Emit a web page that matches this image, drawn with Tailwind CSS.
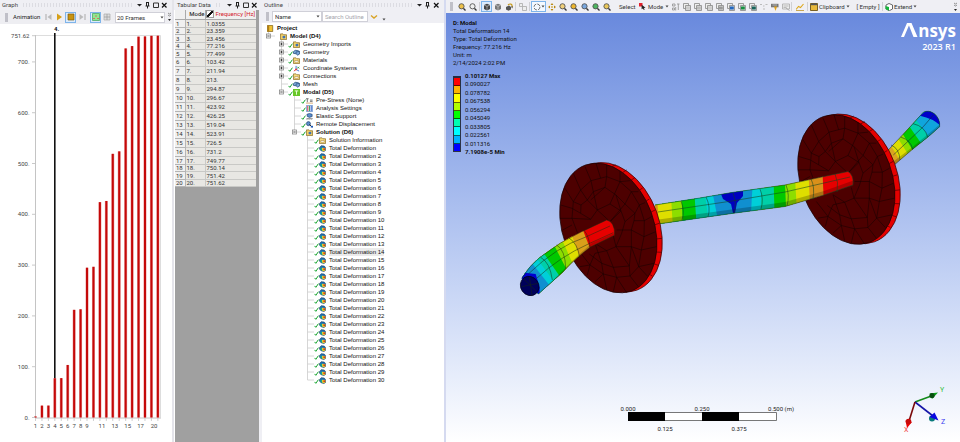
<!DOCTYPE html>
<html lang="en">
<head>
    <meta charset="UTF-8">
    <meta name="viewport" content="width=device-width, initial-scale=1.0">
    <title>Modal Analysis - Total Deformation 14</title>
    <script src="https://cdn.jsdelivr.net/npm/@tailwindcss/browser@4"></script>
</head>
<body class="h-screen overflow-hidden bg-[#efeff4] font-['Roboto',sans-serif] text-[6px] leading-[8px] text-[#333]">
    <!-- Shared icons -->
    <svg class="hidden">
        <symbol id="i-window" viewBox="0 0 32 8">
            <path d="M1 3h5L3.500 5.500z" fill="#222"/>
            <path d="M10 1.500h3M10.500 1.500v3.500M12.500 1.500v3.500M9.500 5h4M11.500 5v2.500" stroke="#222" fill="none"/>
            <path d="M17.500 2h5v4.500h-5z" stroke="#333" fill="none"/>
            <path d="M26 2l4.500 4.500M30.500 2L26 6.500" stroke="#111" stroke-width="1.200"/>
        </symbol>
        <symbol id="i-caret" viewBox="0 0 4 3"><path d="M.5.5h3L2 2.500z" fill="#444"/></symbol>
        <symbol id="i-more" viewBox="0 0 5 10"><path d="M1 1l1.500 1L4 1M1 3l1.500 1L4 3" stroke="#777" stroke-width=".8" fill="none"/><path d="M1 7h3L2.500 9z" fill="#222"/></symbol>
        <symbol id="i-check" viewBox="0 0 6 6"><path d="M.7 3.500L2.200 5.200 5.300.8" stroke="#13a32b" stroke-width="1.200" fill="none"/></symbol>
        <symbol id="i-project" viewBox="0 0 8 8"><path d="M.5.500h6v7h-6z" fill="#f1c232" stroke="#7a5a10" stroke-width=".8"/><path d="M.5.500h2v7h-2z" fill="#b07d14"/></symbol>
        <symbol id="i-folder" viewBox="0 0 8 8"><path d="M.5 1h3l1 1h3v5.500h-7z" fill="#f0cf66" stroke="#84661c" stroke-width=".8"/><circle cx="4.500" cy="4.700" r="1.700" fill="#3f73b5"/></symbol>
        <symbol id="i-folder2" viewBox="0 0 8 8"><path d="M.5 1h3l1 1h3v5.500h-7z" fill="#f7dc7c" stroke="#84661c" stroke-width=".8"/><path d="M2 4h4v2H2z" fill="#fff" stroke="#a6833a" stroke-width=".6"/></symbol>
        <symbol id="i-body" viewBox="0 0 8 8"><path d="M.5 3L2.500 1.500l3 .3 2 1v3L5.300 7 3.500 5.500.5 5z" fill="#7ba7d9" stroke="#1d4573" stroke-width=".8"/><path d="M3.500 3.300l4-.5M3.500 3.300v2.200" stroke="#1d4573" stroke-width=".7"/></symbol>
        <symbol id="i-axes" viewBox="0 0 8 8"><path d="M3.500 1v4l3.500 2" stroke="#2b66d4" fill="none"/><path d="M3.500 5L1 7" stroke="#d33"/><path d="M5 2l2 2M5 4l2-2" stroke="#2a9a49"/><circle cx="3.500" cy="5" r="1" fill="#e33"/></symbol>
        <symbol id="i-modal" viewBox="0 0 8 8"><path d="M0 0h8v8H0z" fill="#67c728"/><path d="M2 2.200h4M4 2.200V6.500" stroke="#e9ffd8" stroke-width="1.100"/></symbol>
        <symbol id="i-prestress" viewBox="0 0 8 8"><path d="M0 2h3M1.500 2v4M4.500 3.500h3M4.500 5h3" stroke="#555" stroke-width=".9"/><path d="M0 7h8" stroke="#c77f28" stroke-width=".7"/></symbol>
        <symbol id="i-settings" viewBox="0 0 8 8"><path d="M.5.500h7v7h-7z" fill="#d9e6f7" stroke="#4a7abf" stroke-width=".7"/><path d="M2 1v6" stroke="#d33"/><path d="M4 1v6" stroke="#2a9a49"/><path d="M6 1v6" stroke="#2b57c4"/></symbol>
        <symbol id="i-support" viewBox="0 0 8 8"><path d="M1 1.500L4 .5l3 1v2.500L4 5 1.500 4z" fill="#5c8dcc" stroke="#163a68" stroke-width=".7"/><path d="M.5 6.500h7M1 7.500l1-1M3.500 7.500l1-1M6 7.500l1-1" stroke="#333" stroke-width=".6"/></symbol>
        <symbol id="i-remote" viewBox="0 0 8 8"><circle cx="2.800" cy="3" r="2.300" fill="#5c8dcc" stroke="#163a68" stroke-width=".7"/><path d="M4 4l3 3" stroke="#111"/><path d="M5.500 5.500h2.500v2H5.500z" fill="#1b57b8"/></symbol>
        <symbol id="i-result" viewBox="0 0 8 8"><path d="M.5 3L2.500.8l3.500.4L7.500 3v3.200L5.500 7.500 2.500 6.500.8 5z" fill="#1f6fb5" stroke="#1c3d5e" stroke-width=".7"/><path d="M1 4.500l2-1.700 1.500 4L2.300 6z" fill="#19a58b"/><path d="M3.300 3l3.900.3v2.900L5.400 7.200 3.800 6.500z" fill="#ecd32a"/><path d="M5 3.800h2v2H5z" fill="#d93a1e"/></symbol>
        <symbol id="i-zoom" viewBox="0 0 8 8"><path d="M5.300 5.300L7.500 7.500" stroke="#333" stroke-width="1.300"/><circle cx="3.500" cy="3.300" r="2.600" fill="currentColor" stroke="#555" stroke-width=".9"/></symbol>
        <symbol id="i-cube" viewBox="0 0 8 8"><path d="M1 2l3-1.300L7 2v4L4 7.500 1 6z" fill="currentColor"/><path d="M1 2l3 1.300L7 2M4 3.300v4" stroke="#eee" stroke-width=".5" fill="none"/></symbol>
        <symbol id="i-spin" viewBox="0 0 8 8"><path d="M1 4l3-1.500L6 4v2.500L3.500 7.700 1 6.500z" fill="#555"/><path d="M3 2C5 0 7.500 1 7.200 4" stroke="#c79a18" stroke-width="1.100" fill="none"/><path d="M6 3.500h2L7.200 5.500z" fill="#444"/></symbol>
        <symbol id="i-windows" viewBox="0 0 8 8"><path d="M.5.500h3v3h-3zM3.500 3.500h4v4h-4z" fill="#eee" stroke="#aaa" stroke-width=".8"/></symbol>
        <symbol id="i-rotate" viewBox="0 0 8 8"><circle cx="4" cy="4" r="3" fill="none" stroke="#666" stroke-width=".9" stroke-dasharray="3.500 1.200"/></symbol>
        <symbol id="i-pan" viewBox="0 0 8 8"><path d="M4 0l1.400 2H2.600zM4 8l1.400-2H2.600zM0 4l2-1.400v2.800zM8 4L6 2.600v2.800z" fill="#b8860b"/><path d="M3.300 3.300h1.400v1.400H3.300z" fill="#c9981c"/></symbol>
        <symbol id="i-mode" viewBox="0 0 8 8"><path d="M0 0h4v4H0z" fill="#e3202c"/><path d="M3 2l4.500 3.500-2 .3 1 1.700-1 .5-1-1.800L3 7.200z" fill="#222"/></symbol>
        <symbol id="i-grid" viewBox="0 0 8 8"><path d="M.5 1h2.500v2H.5zM5 1h2.500M6.300 1v6M.5 5h2v2h-2zM3.700 4v3.500" stroke="#999" stroke-width=".9" fill="none"/></symbol>
        <symbol id="i-copy" viewBox="0 0 8 8"><path d="M.5.500h5v5h-5z" fill="#eee" stroke="#888" stroke-width=".8"/><path d="M2.500 2.500h5v5h-5z" fill="#ddd" stroke="#888" stroke-width=".8"/><path d="M3 3.500h3.800v3H3z" fill="currentColor"/></symbol>
        <symbol id="i-tag" viewBox="0 0 8 8"><path d="M0 .8h7.500v3.500H0z" fill="#777"/><path d="M3 3.500h3L4.500 8z" fill="#e0a21c"/><path d="M1.500 2h4.500" stroke="#ddd" stroke-width=".6"/></symbol>
        <symbol id="i-dots" viewBox="0 0 8 8"><path d="M0 1.500h2M3 3h1.500M5.500 1.500h2M4 5v2" stroke="#bbb"/></symbol>
        <symbol id="i-note" viewBox="0 0 8 8"><path d="M.5 1h7v5h-7z" fill="#eee" stroke="#aaa" stroke-width=".8"/><path d="M1.500 3h5M1.500 4.500h3" stroke="#999" stroke-width=".6"/><path d="M4 5l3.500 2.500" stroke="#aaa"/></symbol>
        <symbol id="i-chart" viewBox="0 0 8 8"><path d="M0 6.500l2.500-3 2 1L7.500 1" stroke="#dda71c" stroke-width="1.100" fill="none"/><path d="M0 7.500h8" stroke="#b8860b" stroke-width=".7"/></symbol>
        <symbol id="i-clipboard" viewBox="0 0 8 8"><path d="M.5.500h7v7h-7z" fill="#e9b93a" stroke="#6d5316" stroke-width=".9"/><path d="M1 .5h6v1.700H1z" fill="#555"/></symbol>
        <symbol id="i-extend" viewBox="0 0 8 8"><path d="M1 2l3-1.500L7.500 2v4L4.300 7.700 1 6z" fill="#fff" stroke="#444" stroke-width=".8"/><path d="M.5 3l3.500 1v3.700L.5 6z" fill="#16b53a"/></symbol>
    </svg>

    <div class="flex h-full">
        <!-- Graph -->
        <section class="flex w-[174px] shrink-0 flex-col border-r-2 border-[#e4e4ea]">
            <header class="flex h-[10px] shrink-0 items-center gap-1 pl-[2px] pr-1">
                <h2 class="text-[#444]">Graph</h2>
                <span class="h-[4px] flex-1 bg-[radial-gradient(#dcdce2_1px,transparent_1px)] bg-[size:3px_2px]"></span>
                <svg class="h-2 w-8"><use href="#i-window"/></svg>
            </header>
            <div class="flex h-[14px] shrink-0 items-center bg-[#eeeef2] pl-[5px]">
                <span class="mr-[5px] h-[9px] w-[3px] bg-[radial-gradient(#c0c0c8_1px,transparent_1px)] bg-[size:2px_2px]"></span>
                <span class="w-[32px] text-[#222]">Animation</span>
                <button aria-label="First frame" class="w-[8px]"><svg viewBox="0 0 8 8" class="size-2"><path d="M1 1v6" stroke="#aaa"/><path d="M6.500 1v6L2.500 4z" fill="#bbb"/></svg></button>
                <button aria-label="Play" class="ml-[2px] w-[10px]"><svg viewBox="0 0 8 8" class="size-2"><path d="M2 .5v7L7 4z" fill="#d6a018"/></svg></button>
                <button aria-label="Stop" class="flex size-[11px] items-center justify-center border border-[#7eb4ea] bg-[#dcebfc]"><svg viewBox="0 0 8 8" class="size-2"><path d="M1 1h6v6H1z" fill="#c8930f" stroke="#7c5c0d" stroke-width=".7"/></svg></button>
                <button aria-label="Last frame" class="ml-[2px] w-[8px]"><svg viewBox="0 0 8 8" class="size-2"><path d="M7 1v6" stroke="#aaa"/><path d="M1.500 1v6l4-3z" fill="#bbb"/></svg></button>
                <button aria-label="Distributed" class="ml-1 flex size-[11px] items-center justify-center border border-[#7eb4ea] bg-[#dcebfc]"><svg viewBox="0 0 8 8" class="size-2"><path d="M.5.500h7v7h-7z" fill="#8fe88f" stroke="#3fa15a" stroke-width=".7"/><path d="M1 5.500h2M5 5.500h2M3 3h2" stroke="#d55" stroke-width=".8"/></svg></button>
                <button aria-label="Result sets" class="flex size-[11px] items-center justify-center"><svg viewBox="0 0 8 8" class="size-2"><path d="M1 1h6v6H1z" fill="#ddd" stroke="#aaa" stroke-width=".7"/><path d="M1 4h6M4 1v6" stroke="#999" stroke-width=".7"/></svg></button>
                <div class="relative ml-[3px] w-[50px]">
                    <select aria-label="Frames" class="block h-[11px] w-full appearance-none border border-[#d0d0d8] bg-white pl-[1px] leading-[9px]"><option>20 Frames</option></select>
                    <svg class="pointer-events-none absolute right-[1px] top-1 h-[3px] w-1"><use href="#i-caret"/></svg>
                </div>
                <svg class="ml-[2px] h-[10px] w-[5px]"><use href="#i-more"/></svg>
            </div>
            <div class="min-h-0 flex-1 bg-white">
                <svg id="chart" viewBox="0 24 172 418" class="h-full w-full" font-size="6" fill="#444">
                    <path d="M35.500 35.500H160.500V417.500" stroke="#ddd" fill="none"/>
                    <path d="M35.500 35V418H161" stroke="#c4c4c4" fill="none"/>
                    <path d="M54.800 33V417" stroke="#111" stroke-width="1.600"/>
                    <text x="54" y="31" fill="#111" font-weight="700">4.</text>
                </svg>
            </div>
        </section>

        <!-- Tabular data -->
        <section class="flex w-[88px] shrink-0 flex-col">
            <header class="flex h-[10px] shrink-0 items-center gap-1 pl-[3px] pr-1">
                <h2 class="whitespace-nowrap text-[#444]">Tabular Data</h2>
                <span class="h-[4px] flex-1 bg-[radial-gradient(#dcdce2_1px,transparent_1px)] bg-[size:3px_2px]"></span>
                <svg class="h-2 w-8"><use href="#i-window"/></svg>
            </header>
            <div class="mr-[3px] flex-1 border-l border-white bg-[#a0a0a0] pr-[3px]">
                <table class="w-full table-fixed border-collapse text-left text-[#333]">
                    <colgroup><col class="w-[10px]"><col class="w-[20px]"><col></colgroup>
                    <thead>
                        <tr class="h-[9px] bg-[#f0f0f0]">
                            <th class="border-b border-r border-[#aaa] p-0"></th>
                            <th class="border-b border-r border-[#aaa] p-0 text-right font-medium">Mode</th>
                            <th class="border-b border-[#aaa] p-0 font-normal text-[#d4202c]">
                                <span class="flex items-center gap-[2px] whitespace-nowrap">
                                    <input id="freq" type="checkbox" checked class="size-[8px] appearance-none border border-[#999] bg-white bg-[linear-gradient(135deg,transparent_40%,#111_40%,#111_65%,transparent_65%)]">
                                    <label for="freq">Frequency [Hz]</label>
                                </span>
                            </th>
                        </tr>
                    </thead>
                    <tbody id="modes"></tbody>
                </table>
            </div>
        </section>

        <!-- Outline -->
        <section class="flex w-[184px] shrink-0 flex-col border-r-2 border-[#d5daf0]">
            <header class="flex h-[10px] shrink-0 items-center gap-1 pl-[2px] pr-1">
                <h2 class="text-[#444]">Outline</h2>
                <span class="h-[4px] flex-1 bg-[radial-gradient(#dcdce2_1px,transparent_1px)] bg-[size:3px_2px]"></span>
                <svg viewBox="0 0 24 8" class="h-2 w-6"><path d="M1 3h5L3.500 5.500z" fill="#222"/><path d="M10 1.500h3M10.500 1.500v3.500M12.500 1.500v3.500M9.500 5h4M11.500 5v2.500" stroke="#222" fill="none"/><path d="M18 2l4.500 4.500M22.500 2L18 6.500" stroke="#111" stroke-width="1.200"/></svg>
            </header>
            <div class="flex h-[13px] shrink-0 items-center pl-1">
                <span class="mr-[3px] h-[9px] w-[3px] bg-[radial-gradient(#c0c0c8_1px,transparent_1px)] bg-[size:2px_2px]"></span>
                <div class="relative w-[50px]">
                    <select aria-label="Filter by" class="block h-[11px] w-full appearance-none border border-[#d0d0d8] bg-white pl-[2px] leading-[9px]"><option>Name</option></select>
                    <svg class="pointer-events-none absolute right-[2px] top-1 h-[3px] w-1"><use href="#i-caret"/></svg>
                </div>
                <input type="text" aria-label="Search Outline" placeholder="Search Outline" class="h-[11px] w-[46px] border border-[#d0d0d8] bg-white px-[2px] placeholder:text-[#a5a5ad]">
                <button aria-label="Search options" class="ml-[2px]"><svg viewBox="0 0 8 8" class="size-2"><path d="M1 2.500l3 2.500 3-2.500" stroke="#d9a426" stroke-width="1.400" fill="none"/></svg></button>
                <svg class="ml-1 mt-[5px] h-[3px] w-1"><use href="#i-caret"/></svg>
            </div>
            <ul id="tree" class="flex-1 bg-white pt-[1px] font-['Liberation_Sans',sans-serif] text-[6px] text-[#111]"></ul>
        </section>

        <!-- Graphics window -->
        <main class="flex min-w-0 flex-1 flex-col">
            <nav class="flex h-[13px] shrink-0 items-center overflow-hidden whitespace-nowrap pl-[4px]">
                <span class="mr-[3px] h-[9px] w-[3px] bg-[radial-gradient(#c0c0c8_1px,transparent_1px)] bg-[size:2px_2px]"></span>
                <div id="tools-view" class="flex items-center"></div>
                <button class="ml-[7px] w-[20px] text-left">Select</button>
                <button class="flex w-[31px] items-center gap-[2px]"><svg class="size-[7px]"><use href="#i-mode"/></svg>Mode<svg class="h-[3px] w-1"><use href="#i-caret"/></svg></button>
                <div id="tools-select" class="flex items-center"></div>
                <span class="h-[9px] border-l border-[#d0d0d4]"></span>
                <button aria-label="Chart" class="ml-1 w-[11px]"><svg class="size-2"><use href="#i-chart"/></svg></button>
                <span class="h-[9px] border-l border-[#d0d0d4]"></span>
                <button class="ml-[2px] flex w-[44px] items-center gap-[1px]"><svg class="size-[8px]"><use href="#i-clipboard"/></svg>Clipboard<svg class="h-[3px] w-1"><use href="#i-caret"/></svg></button>
                <button class="w-[28px]">[ Empty ]</button>
                <span class="h-[9px] border-l border-[#d0d0d4]"></span>
                <button class="ml-[2px] flex items-center gap-[1px]"><svg class="size-[8px]"><use href="#i-extend"/></svg>Extend<svg class="h-[3px] w-1"><use href="#i-caret"/></svg></button>
                <svg class="ml-auto mr-[2px] h-[10px] w-[5px]"><use href="#i-more"/></svg>
            </nav>
            <div class="relative min-h-0 flex-1 bg-linear-to-b from-[#6989dd] to-white text-[#111]">
                <svg id="model" viewBox="446 13 514 429" class="absolute inset-0 h-full w-full" stroke-linejoin="round">
                    <defs>
                        <!-- Disk drawn at three times its size -->
                        <g id="disk">
                            <ellipse cx="311" cy="232" rx="137" ry="201" transform="rotate(-20 311 232)" fill="#e60000" stroke="#300" stroke-width="2"/>
                            <ellipse cx="295" cy="234" rx="137" ry="201" transform="rotate(-20 295 234)" fill="#4d0000" stroke="#1a0000" stroke-width="2"/>
                            <path d="M317 44l-14 7M350 60l-13 8M374 84l-14 8M398 114l-14 9M418 147l-14 9M435 180l-15 8M448 220l-16 5M456 265l-17 2M455 307l-17-1M445 346l-15-5M427 378l-12-7" stroke="#400" stroke-width="2"/>
                            <path fill="none" stroke="#140000" stroke-width="2" opacity=".8" d="M290 80L243 92 212 120 190 155 186 205 205 255M290 80L330 95 364 125 388 165 403 212 402 260 394 300 386 350 360 378 320 382 280 372 240 345 205 300
                                M213 165L232 150 250 125 285 112 318 135 345 162 375 190 372 212 364 240 364 290 358 348 310 352 275 340 238 312M213 165L212 190 242 208 262 180 300 162 333 183 345 215 335 250 318 290 290 302 255 280
                                M225 50L243 92 250 125 262 180 295 210M258 40L272 85M318 135L333 183 300 215M290 45L290 80 285 112 242 150M190 70L212 120 232 150 262 180M165 115L190 155 213 165M152 165L186 175 212 190M150 205L186 205 242 208M158 240L186 225
                                M330 62L330 95 300 162M360 92L330 95M385 125L364 125 345 162 300 215M405 158L388 165 375 190 345 215M425 200L403 212 372 212M437 245L402 260 364 240 320 240M440 290L394 300 364 290 318 290 310 258M432 340L386 350 364 290M412 378L386 350M385 410L360 378 358 348 318 290M350 428L320 382 310 352 290 302M310 425L320 382M290 418L280 372 275 340 255 280M255 395L280 372M232 375L240 345 255 310 290 302M210 350L240 345"/>
                        </g>
                        <clipPath id="shaft"><path d="M655 205L700 198 732 192.500 785 185 824 176.500 848 171.500Q854 175 853 185L824 195 785 206.500 735 213 658 224Z"/></clipPath>
                        <clipPath id="near"><path d="M35 385Q60 345 90 322Q150 275 215 245L290 210Q315 215 314 256L240 292Q190 330 160 365L85 432Z"/></clipPath>
                        <clipPath id="far"><path d="M305 170L345 128 385 85 415 52Q430 44 448 56 466 72 464 95L430 125 380 165 330 208Z"/></clipPath>
                    </defs>
                    <!-- Far end of the shaft -->
                    <g transform="translate(785 95) scale(.3333)">
                        <g clip-path="url(#far)">
                            <path d="M280 30h200v200h-200z" fill="#d9a520"/>
                            <path d="M315 148l35 55 140-60v-120h-90z" fill="#dede00"/>
                            <path d="M336 125l38 60 120-60v-110h-90z" fill="#8ddd00"/>
                            <path d="M350 112l36 58 110-60v-90h-90z" fill="#00c800"/>
                            <path d="M370 90l42 60 90-50v-80h-90z" fill="#00cfa8"/>
                            <path d="M388 68l46 58 60-40v-60h-70z" fill="#10a5dc"/>
                            <path d="M405 62l30-24 40 25-8 30q-20-22-62-31z" fill="#0000c8"/>
                            <path d="M330 215L470 105V84L380 158 322 202z" fill="#000" opacity=".2"/>
                        </g>
                        <path d="M305 170L345 128 385 85 415 52Q430 44 448 56 466 72 464 95L430 125 380 165 330 208M325 180L370 138 415 95 445 60M318 150q25 10 27 45M347 126q32 10 36 38M384 86q36 8 44 40" fill="none" stroke="#123" stroke-width="2" opacity=".8"/>
                    </g>
                    <use href="#disk" transform="translate(748 101.500) scale(.3333)"/>
                    <!-- Middle of the shaft -->
                    <g clip-path="url(#shaft)">
                        <path d="M650 160h220v70h-220z" fill="#e60000"/>
                        <path d="M650 160h172l3 70h-175z" fill="#d9901a"/>
                        <path d="M650 160h158l3 70h-161z" fill="#dede00"/>
                        <path d="M650 160h144l4 70h-148z" fill="#8ddd00"/>
                        <path d="M650 160h134l3 70h-137z" fill="#00c800"/>
                        <path d="M650 160h123l2 70h-125z" fill="#00cfa8"/>
                        <path d="M650 160h112l-2 70h-110z" fill="#00cfd8"/>
                        <path d="M650 160h104l-4 70h-100z" fill="#108fd0"/>
                        <path d="M650 160h56l14 70h-70z" fill="#00cfd8"/>
                        <path d="M650 160h50l10 70h-60z" fill="#00cfa8"/>
                        <path d="M650 160h42l5 70h-47z" fill="#00c800"/>
                        <path d="M650 160h30l3 70h-33z" fill="#8ddd00"/>
                        <path d="M650 160h19l4 70h-23z" fill="#dede00"/>
                        <path d="M650 160h5l4 70h-9z" fill="#d9901a"/>
                        <path d="M721 194l22-4v6l-6 7-2 10h-2l-2-9-8-5z" fill="#0000c0"/>
                        <path d="M655 220L735 209 785 202 824 191 855 180V190L785 208 658 226z" opacity=".22"/>
                    </g>
                    <path d="M655 205L700 198 732 192.500 785 185 824 176.500 848 171.500Q854 175 853 185L824 195 785 206.500 735 213 658 224M658 212L732 201 785 192 850 177M681 201q4 10 1 19M706 197q5 10 2 20M733 193q4 10 1 20M760 189q4 10 1 20M786 185q4 10 1 21M811 179q4 8 2 20M835 174q4 8 2 18" fill="none" stroke="#142" stroke-width=".7" opacity=".8"/>
                    <use href="#disk" transform="translate(510 150) scale(.3333)"/>
                    <!-- Near end of the shaft -->
                    <g transform="translate(510 150) scale(.3333)">
                        <g clip-path="url(#near)">
                            <path d="M20 190h310v260H20z" fill="#e60000"/>
                            <path d="M215 230l27 70-110 150H20V230z" fill="#d9a01a"/>
                            <path d="M182 245l28 80-80 125H20V230z" fill="#dede00"/>
                            <path d="M152 260l38 85-70 105H20V260z" fill="#8ddd00"/>
                            <path d="M132 285l36 70-60 95H20V285z" fill="#00c800"/>
                            <path d="M98 305l50 72-50 73H20V305z" fill="#00cfa8"/>
                            <path d="M78 322l52 70-40 58H20V322z" fill="#00cfd8"/>
                            <path d="M65 338l55 70-30 42H20V338z" fill="#108fd0"/>
                            <path d="M45 368l32 4 12 40v40H20V368z" fill="#0000d0"/>
                            <path d="M80 440L165 355 200 320 245 280 320 246V270L160 380z" opacity=".2"/>
                        </g>
                        <ellipse cx="59" cy="408" rx="27" ry="30" transform="rotate(-35 59 408)" fill="#00005a" stroke="#001" stroke-width="2"/>
                        <path d="M35 385Q60 345 90 322Q150 275 215 245L290 210Q315 215 314 256L240 292Q190 330 160 365L85 432M55 372Q140 290 225 262L300 228M80 385Q150 320 235 282L310 248M92 322q28 15 35 68M140 285q26 15 27 70M176 263q28 18 33 60M222 241q16 18 18 52M35 410l50-10M58 380l8 55M42 388l35 34" fill="none" stroke="#142a10" stroke-width="2" opacity=".75"/>
                    </g>
                    <!-- Scale ruler -->
                    <g font-size="6" fill="#222" text-anchor="middle">
                        <path d="M628.500 412.500h148v8h-148z" fill="#fff" stroke="#555" stroke-width=".8"/>
                        <path d="M628 412h37v9h-37zM702 412h37v9h-37z" fill="#000"/>
                        <text x="628" y="411">0.000</text>
                        <text x="702" y="411">0.250</text>
                        <text x="781" y="411">0.500 (m)</text>
                        <text x="665" y="431">0.125</text>
                        <text x="739" y="431">0.375</text>
                    </g>
                    <!-- Axis triad -->
                    <path d="M915 402L934 395" stroke="#138a1b" stroke-width="1.600"/>
                    <path d="M938 392.500L929.500 393.500 932 399z" fill="#0ba01a"/><circle cx="932" cy="395.500" r="2.600" fill="#084f10"/>
                    <circle cx="932" cy="418.500" r="3" fill="#087a7a"/>
                    <path d="M915 402L933 416" stroke="#1717a8" stroke-width="1.600"/>
                    <path d="M938.500 420.500L929.500 417 934.500 412.500z" fill="#0909e0"/>
                    <path d="M915 402L909 421" stroke="#7a0a0a" stroke-width="1.600"/>
                    <path d="M907 428L905.500 420.500 912 422z" fill="#e00"/><circle cx="908.500" cy="421.500" r="2.800" fill="#c80a0a"/>
                    <g font-size="7">
                        <text x="940" y="392" fill="#35c03c">Y</text>
                        <text x="941" y="424" fill="#3a3af0">Z</text>
                        <text x="904" y="432" fill="#f03a3a">X</text>
                    </g>
                </svg>
                <div class="absolute left-[7px] top-[6px]">
                    <p class="font-bold">D: Modal</p>
                    <p>Total Deformation 14</p>
                    <p>Type: Total Deformation</p>
                    <p>Frequency: 77.216 Hz</p>
                    <p>Unit: m</p>
                    <p>2/14/2024 2:02 PM</p>
                    <div class="mt-[5px] flex gap-1">
                        <div class="my-1 flex w-2 flex-col divide-y divide-black/60 border border-t-2 border-black/70">
                            <span class="flex-1 bg-[#ff0000]"></span>
                            <span class="flex-1 bg-[#ffb200]"></span>
                            <span class="flex-1 bg-[#ffff00]"></span>
                            <span class="flex-1 bg-[#b2ff00]"></span>
                            <span class="flex-1 bg-[#00ff00]"></span>
                            <span class="flex-1 bg-[#00ffb2]"></span>
                            <span class="flex-1 bg-[#00ffff]"></span>
                            <span class="flex-1 bg-[#00b2ff]"></span>
                            <span class="flex-1 bg-[#0000ff]"></span>
                        </div>
                        <div class="flex h-[84px] flex-col justify-between">
                            <b>0.10127 Max</b>
                            <span>0.090027</span>
                            <span>0.078782</span>
                            <span>0.067538</span>
                            <span>0.056294</span>
                            <span>0.045049</span>
                            <span>0.033805</span>
                            <span>0.022561</span>
                            <span>0.011316</span>
                            <b>7.1908e-5 Min</b>
                        </div>
                    </div>
                </div>
                <div class="absolute right-1 top-[8px] text-right font-['Open_Sans',sans-serif] text-white">
                    <div class="flex items-end text-[17px] font-bold leading-[20px]" role="img" aria-label="Ansys">
                        <svg viewBox="0 0 17 14" class="mb-[4px] h-[14px] w-[17px]"><path d="M0 14L6 0h3L3 14zM7 0h3.500l6 14h-4z" fill="#fff"/></svg>nsys
                    </div>
                    <p class="mt-[1px] text-[9px] font-semibold leading-[10px]">2023 R1</p>
                </div>
            </div>
        </main>
    </div>

    <script>
        var freqs = ['1.0355', '23.359', '23.456', '77.216', '77.499', '103.42', '211.94', '213.', '294.87', '296.67', '423.92', '426.25', '519.04', '523.91', '726.5', '731.2', '749.77', '750.14', '751.42', '751.62'];

        // Frequency table
        document.getElementById('modes').innerHTML = freqs.map(function (f, i) {
            var h = i > 4 && i < 16 ? 'h-[9px] leading-[8px]' : i % 2 ? 'h-[7px] leading-[6px]' : 'h-[8px] leading-[7px]';
            return '<tr class="bg-[#e8e7e3] ' + h + '"><th class="border-b border-r border-[#b5b5b5] bg-[#f0f0f0] p-0 pl-[1px] font-normal">' + (i + 1) +
                '</th><td class="border-b border-r border-[#c9c9c6] p-0 pl-[1px]">' + (i + 1) + '.</td><td class="border-b border-[#c9c9c6] p-0 pl-[1px]">' + f + '</td></tr>';
        }).join('');

        // Bar chart
        var base = 417.5, scale = 381.8 / 751.62, out = '';
        freqs.forEach(function (f, i) {
            var x = 35.5 + i * 6.44, h = Math.max(parseFloat(f) * scale, 1);
            out += '<rect x="' + (x - 1.5) + '" y="' + (base - h) + '" width="3" height="' + h + '" fill="#eba3a3"/>';
            out += '<rect x="' + (x - 1) + '" y="' + (base - h) + '" width="2" height="' + h + '" fill="#c40808"/>';
            out += '<path d="M' + x + ' 418v3" stroke="#c4c4c4" stroke-width=".8"/>';
        });
        [0, 100, 200, 300, 400, 500, 600, 700, 751.62].forEach(function (v) {
            var y = base - v * scale;
            out += '<path d="M32 ' + y + 'h3" stroke="#bbb" stroke-width=".8"/><text x="29.5" y="' + (y + 2) + '" text-anchor="end">' + (v % 1 ? v : v + '.') + '</text>';
        });
        [1, 2, 3, 4, 5, 6, 7, 8, 9, 11, 13, 15, 17, 20].forEach(function (m) {
            var x = m === 20 ? 154 : 35.5 + (m - 1) * 6.44 + (m > 9 ? 2 : 0);
            out += '<text x="' + x + '" y="427.5" text-anchor="middle">' + m + '</text>';
        });
        document.getElementById('chart').innerHTML += out;

        // Outline rows: depth, icon, label, expander
        var rows = [
            [0, 'project', 'Project'], [1, 'folder', 'Model (D4)', '-'],
            [2, 'folder', 'Geometry Imports', '+'], [2, 'body', 'Geometry', '+'], [2, 'folder2', 'Materials', '+'],
            [2, 'axes', 'Coordinate Systems', '+'], [2, 'folder2', 'Connections', '+'], [2, 'body', 'Mesh'],
            [2, 'modal', 'Modal (D5)', '-'],
            [3, 'prestress', 'Pre-Stress (None)'], [3, 'settings', 'Analysis Settings'], [3, 'support', 'Elastic Support'],
            [3, 'remote', 'Remote Displacement'], [3, 'folder', 'Solution (D6)', '-'],
            [4, 'folder2', 'Solution Information'], [4, 'result', 'Total Deformation']
        ];
        for (var n = 2; n <= 30; n++) rows.push([4, 'result', 'Total Deformation ' + n]);

        document.getElementById('tree').innerHTML = rows.map(function (r, i) {
            var w = r[0] * 13, x = w - 6.5, last = !rows[i + 1] || rows[i + 1][0] < r[0] || /D[456]/.test(r[2]);
            var bold = r[0] === 0 || /D[456]/.test(r[2]);
            var svg = '';
            if (r[0]) {
                svg = '<svg class="h-2 shrink-0" width="' + w + '" height="8"><path d="M' + x + ' 0V' + (last ? 4 : 8) + 'M' + x + ' 4H' + w + '" stroke="#ccc" fill="none" stroke-width=".8"/>';
                if (r[3]) svg += '<rect x="' + (x - 2) + '" y="2" width="4" height="4" fill="#fff" stroke="#888" stroke-width=".8"/><path d="M' + (x - 1.2) + ' 4h2.4' + (r[3] === '+' ? 'M' + x + ' 2.800v2.400' : '') + '" stroke="#222" stroke-width=".8"/>';
                svg += '</svg>';
            }
            return '<li class="flex h-2 items-center whitespace-nowrap">' + svg +
                '<span class="flex h-2 w-[5px] shrink-0 items-end">' + (r[0] > 1 ? '<svg class="size-[5px] shrink-0"><use href="#i-check"/></svg>' : '') + '</span>' +
                '<svg class="mr-[3px] size-[7px] shrink-0"><use href="#i-' + r[1] + '"/></svg>' +
                '<span class="' + (bold ? 'font-bold' : '') + (r[2] === 'Total Deformation 14' ? 'bg-[#ebebeb]' : '') + '">' + r[2] + '</span></li>';
        }).join('');

        // Toolbar icons: name, tint, and a class list for the boxed ones; '|' is a separator
        function tools(list) {
            return list.map(function (t) {
                if (t === '|') return '<span class="mx-[1px] h-[9px] border-l border-[#d0d0d4]"></span>';
                return '<button aria-label="' + t[0] + '" class="flex h-[11px] shrink-0 items-center justify-center ' + (t[2] || 'w-[11px]') + '"><svg class="size-2 ' + (t[1] || '') + '"><use href="#i-' + t[0] + '"/></svg>' +
                    (t[0] === 'rotate' ? '<svg class="h-[3px] w-1"><use href="#i-caret"/></svg>' : '') + '</button>';
            }).join('');
        }
        document.getElementById('tools-view').innerHTML = tools([
            ['zoom', 'text-[#edc04a]'], ['zoom', 'text-[#eeeeee]'], '|',
            ['cube', 'text-[#444444]', 'w-[11px] border border-[#7eb4ea] bg-[#dcebfc]'], ['cube', 'text-[#777777]'], ['spin'], '|',
            ['windows'], '|', ['rotate', '', 'w-[15px] border border-[#7eb4ea] bg-[#f4f9ff]'], ['pan'],
            ['zoom', 'text-[#f0cf7a]'], ['zoom', 'text-[#edb62e]'], ['zoom', 'text-[#79a6dd]'], ['zoom', 'text-[#4db560]'], ['zoom', 'text-[#e9c658]']
        ]);
        document.getElementById('tools-select').innerHTML = tools([
            ['grid'], ['copy', 'text-[#cccccc]'], ['copy', 'text-[#bbbbbb]'], ['copy', 'text-[#cccccc]'], ['copy', 'text-[#999999]'],
            ['copy', 'text-[#2468c0]'], ['copy', 'text-[#159040]'], ['copy', 'text-[#17635a]'], ['dots'], ['tag'], ['note']
        ]);
    </script>
</body>
</html>
